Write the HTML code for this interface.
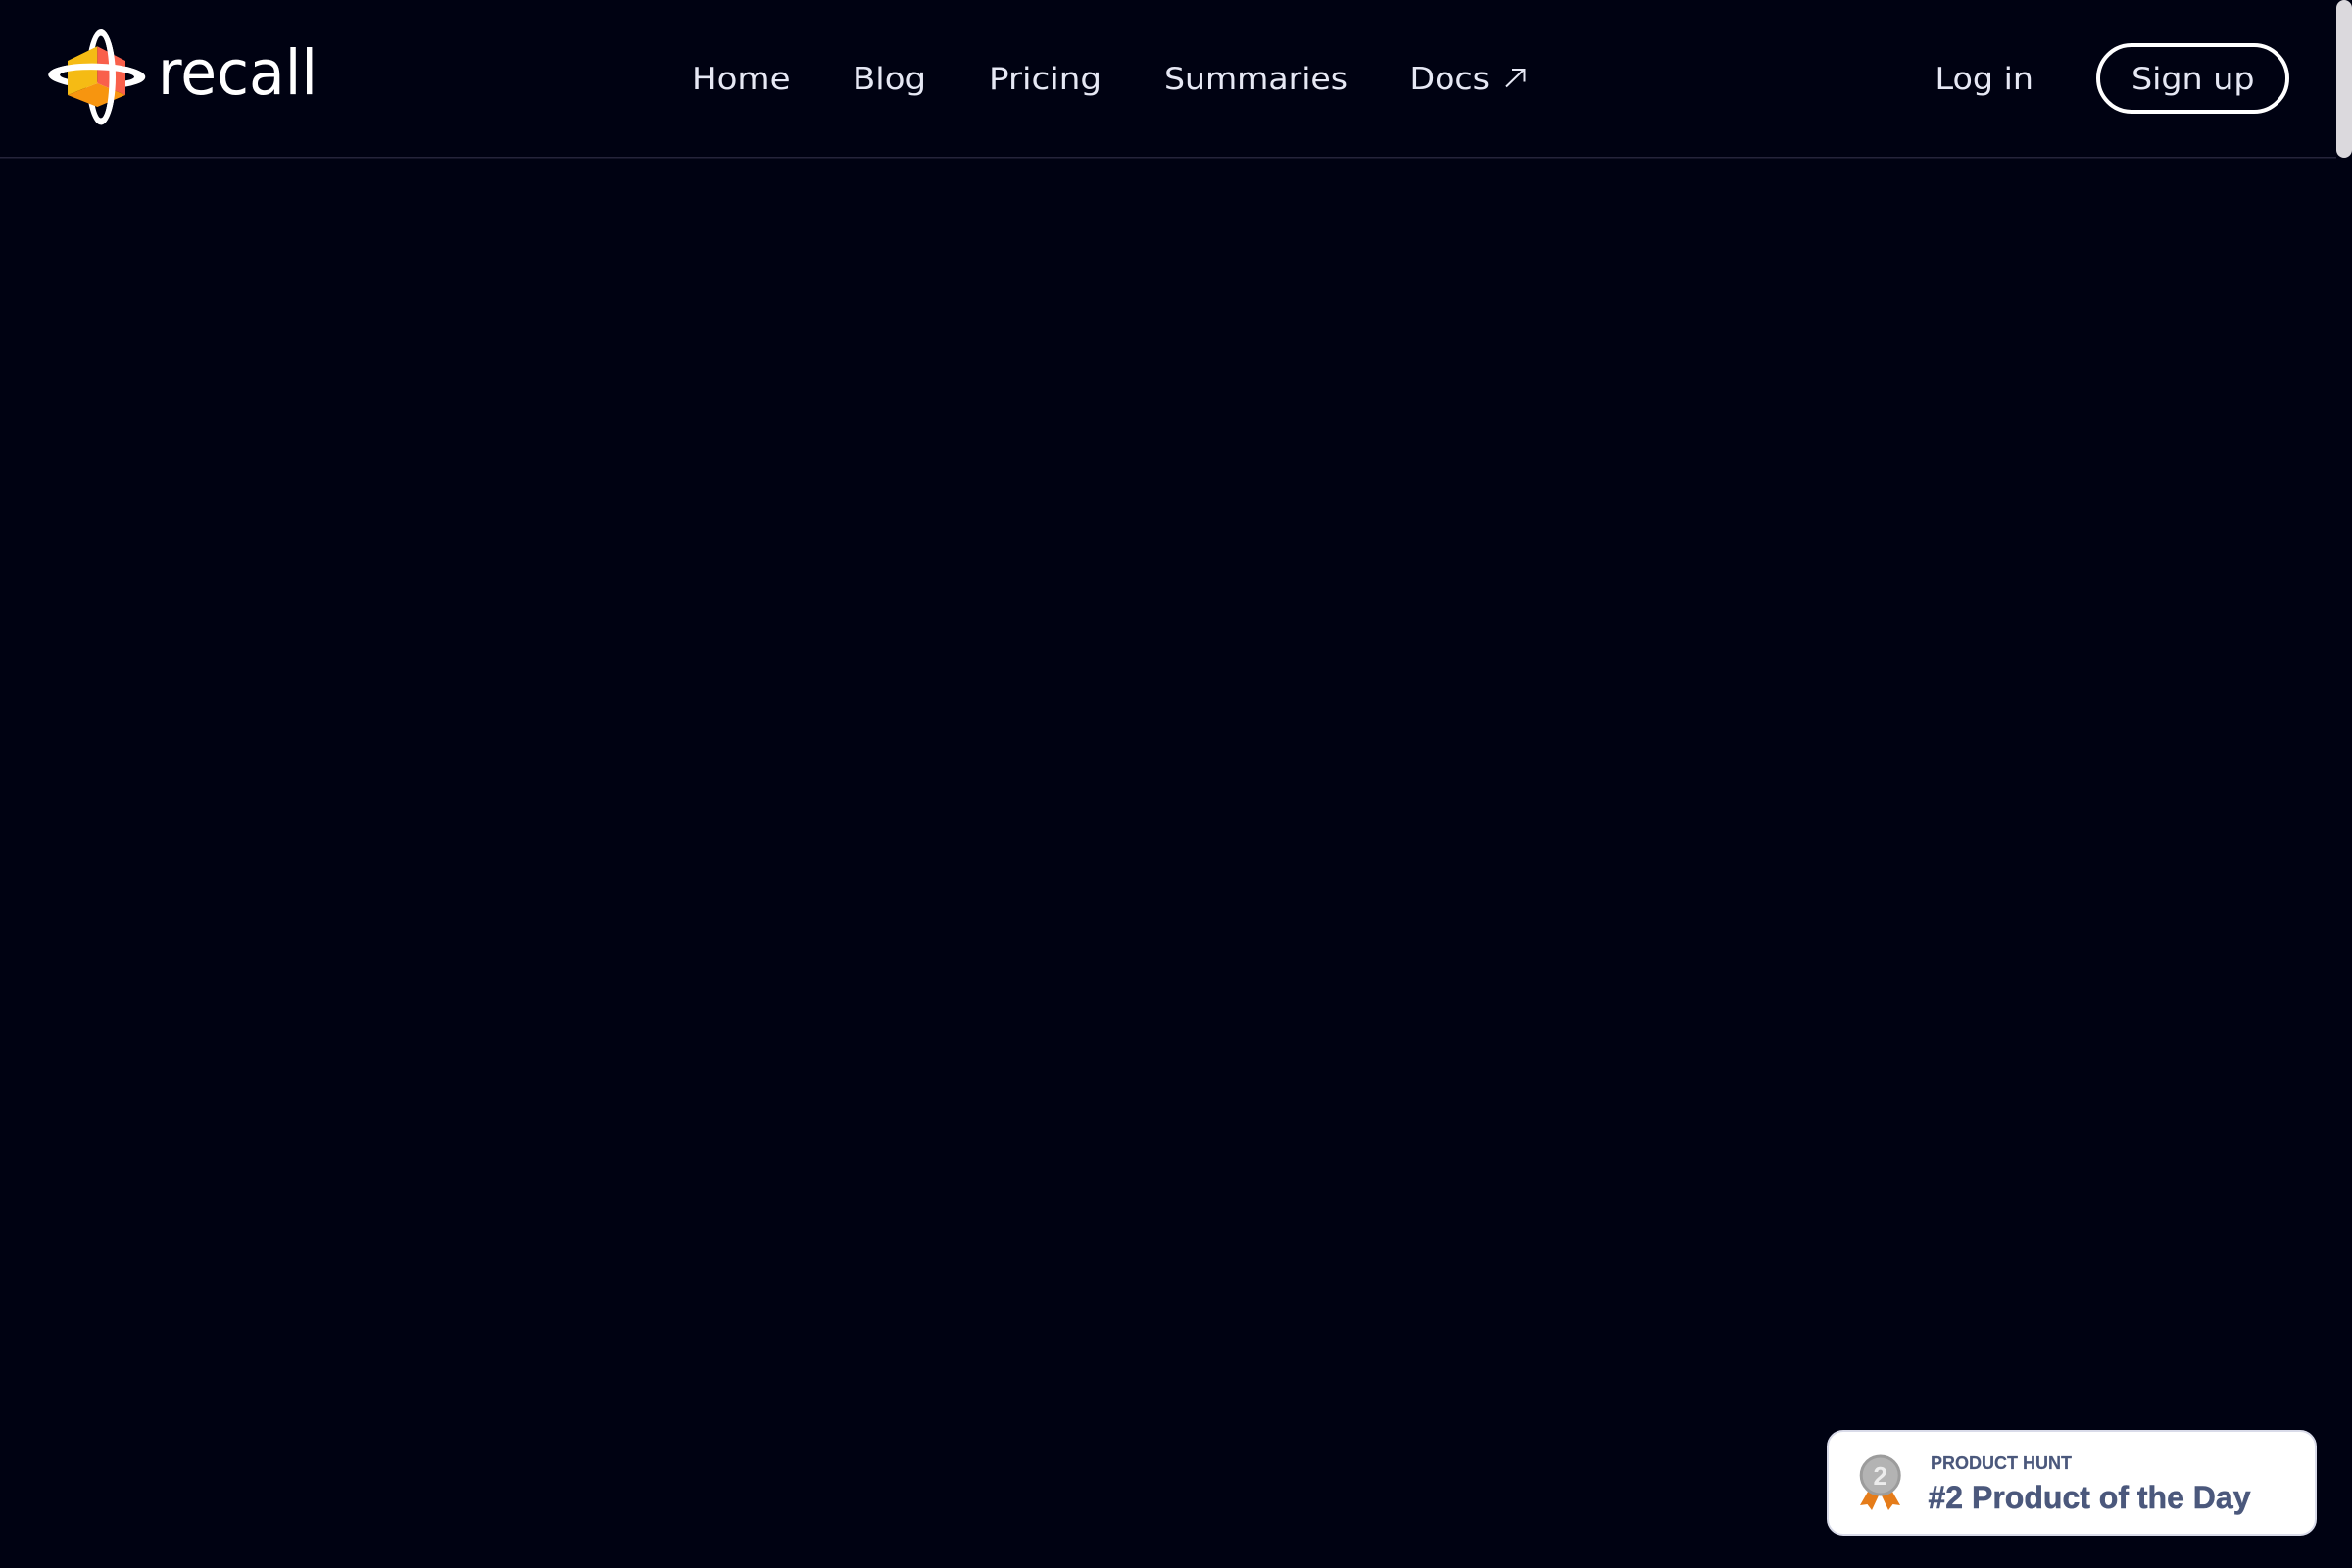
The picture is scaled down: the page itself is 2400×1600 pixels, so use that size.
<!DOCTYPE html>
<html lang="en">
<head>
<meta charset="utf-8">
<title>Recall</title>
<style>
html,body{margin:0;padding:0;width:2400px;height:1600px;overflow:hidden;background:#000212}
svg{display:block;position:absolute;left:0;top:0}
</style>
</head>
<body>
<svg width="2400" height="1600" viewBox="0 0 2400 1600" xmlns="http://www.w3.org/2000/svg">
<defs>
<clipPath id="topHalf"><rect x="40" y="20" width="120" height="58"/></clipPath>
<clipPath id="rightHalf"><rect x="103" y="20" width="30" height="120"/></clipPath>
</defs>
<rect width="2400" height="1600" fill="#000212"/>

<!-- header divider and scrollbar -->
<rect x="0" y="160" width="2384" height="1.5" fill="#25243a"/>
<rect x="2384" y="0" width="16" height="161" rx="8" fill="#dbd9dd"/>

<!-- logo -->
<path fill="#fff" fill-rule="evenodd" d="M103 30a15 48.700 0 1 0 .001 0ZM103 36.500a8.500 42 0 1 1-.001 0Z"/>
<g transform="rotate(1.500 99 77.500)"><path fill="#fff" fill-rule="evenodd" d="M49.300 77.500a49.500 12.800 0 1 0 99 0a49.500 12.800 0 1 0-99 0ZM61 77.500a38 6.300 0 1 1 76 0a38 6.300 0 1 1-76 0Z"/></g>
<polygon points="69,62 99.300,47.300 99.300,85 69,97" fill="#f5bb14"/>
<polygon points="99.300,47.300 128,62 128,97 99.300,85" fill="#f9604b"/>
<polygon points="69,97 99.300,85 128,97 99.300,109" fill="#f7950f"/>
<g clip-path="url(#rightHalf)"><path fill="#fff" fill-rule="evenodd" d="M103 30a15 48.700 0 1 0 .001 0ZM103 36.500a8.500 42 0 1 1-.001 0Z"/></g>
<g clip-path="url(#topHalf)"><g transform="rotate(1.500 99 77.500)"><path fill="#fff" fill-rule="evenodd" d="M49.300 77.500a49.500 12.800 0 1 0 99 0a49.500 12.800 0 1 0-99 0ZM61 77.500a38 6.300 0 1 1 76 0a38 6.300 0 1 1-76 0Z"/></g></g>
<text x="161" y="96" font-family="'DejaVu Sans',sans-serif" font-size="63" fill="#fff" textLength="163" lengthAdjust="spacingAndGlyphs">recall</text>

<!-- nav -->
<g font-family="'DejaVu Sans',sans-serif" font-size="31" fill="#e6e8f4">
<text x="706" y="91" textLength="100.500" lengthAdjust="spacingAndGlyphs">Home</text>
<text x="870" y="91" textLength="75" lengthAdjust="spacingAndGlyphs">Blog</text>
<text x="1009" y="91" textLength="115" lengthAdjust="spacingAndGlyphs">Pricing</text>
<text x="1188" y="91" textLength="187" lengthAdjust="spacingAndGlyphs">Summaries</text>
<text x="1438.500" y="91" textLength="81.500" lengthAdjust="spacingAndGlyphs">Docs</text>
<text x="1974.500" y="91" textLength="100.500" lengthAdjust="spacingAndGlyphs">Log in</text>
<text x="2175" y="91" textLength="125.500" lengthAdjust="spacingAndGlyphs">Sign up</text>
</g>
<path d="M1537 88.500 L1555 71 M1543 71 H1555.500 V83.500" fill="none" stroke="#e6e8f4" stroke-width="2"/>

<!-- sign up button -->
<rect x="2141" y="46" width="193" height="68" rx="34" fill="none" stroke="#fff" stroke-width="4"/>

<!-- Product Hunt badge -->
<rect x="1865" y="1460" width="498" height="106" rx="16" fill="#fff" stroke="#d9dbe9" stroke-width="2"/>
<polygon points="1906,1522 1917,1526 1910,1541 1905.500,1535 1898,1536" fill="#e57c1a"/>
<polygon points="1931,1522 1920,1526 1927,1541 1931.500,1535 1939,1536" fill="#e57c1a"/>
<circle cx="1918.700" cy="1505.500" r="19.500" fill="#b3b3b3" stroke="#9c9c9c" stroke-width="3"/>
<text x="1918.700" y="1515" text-anchor="middle" font-family="'Liberation Sans',sans-serif" font-weight="700" font-size="26" fill="#ececec">2</text>
<g font-family="'Liberation Sans',sans-serif" font-weight="700" fill="#4b587c" stroke="#4b587c">
<text x="1970" y="1499" font-size="18" stroke-width="0.200" textLength="144" lengthAdjust="spacingAndGlyphs">PRODUCT HUNT</text>
<text x="1967.500" y="1539" font-size="32" stroke-width="0.500" textLength="329" lengthAdjust="spacingAndGlyphs">#2 Product of the Day</text>
</g>
</svg>
</body>
</html>
